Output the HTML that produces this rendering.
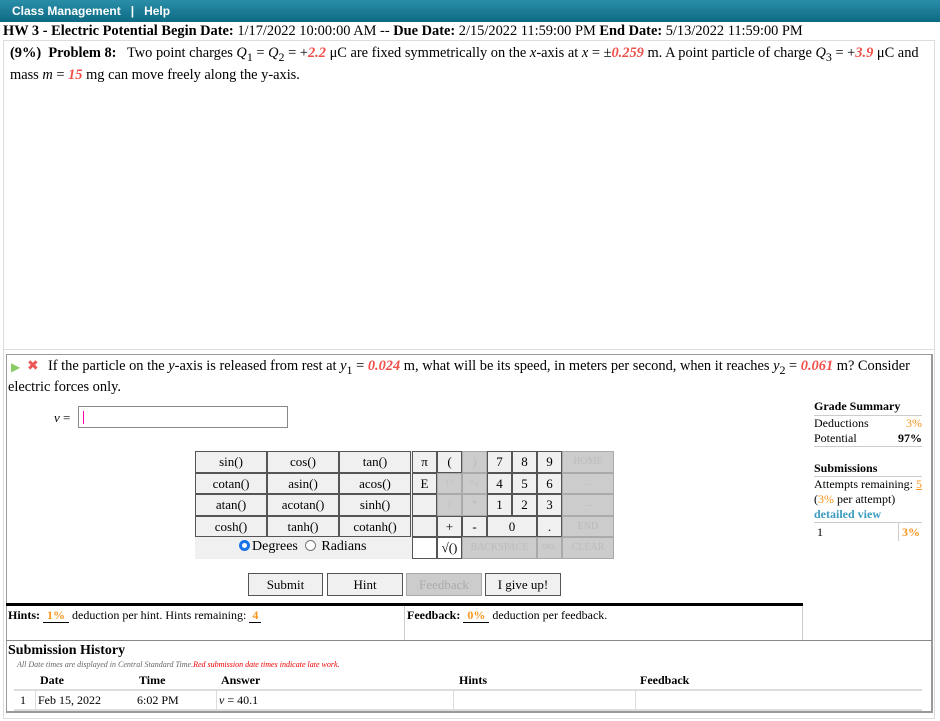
<!DOCTYPE html>
<html><head><meta charset="utf-8"><style>
*{margin:0;padding:0;box-sizing:border-box}
body{width:940px;height:721px;background:#fff;font-family:"Liberation Serif",serif;font-size:13px;color:#000;position:relative;overflow:hidden}
.a{position:absolute;white-space:nowrap}
.r{color:#f0504a;font-style:italic;font-weight:bold}
.o{color:#f7941d}
.bar{left:0;top:0;width:940px;height:22px;background:linear-gradient(#2a8ea8,#0e6a85);color:#fff;font-family:"Liberation Sans",sans-serif;font-weight:bold;font-size:12px;padding:4px 0 0 12px}
.c{position:absolute;border:1px solid #555;background:#f0f0f0;text-align:center;font-size:13px;line-height:19px}
.c.d{background:#ccc;color:#bbb;border-color:#aaa;font-size:10px}
.btn{position:absolute;top:573px;height:23px;border:1px solid #555;background:#f0f0f0;text-align:center;line-height:21px;font-size:13px}
.rad{display:inline-block;width:11px;height:11px;border-radius:50%;border:1px solid #777;vertical-align:-1px;margin-right:2px;background:#fff}
.rad.on{border:3px solid #1a73e8}
</style></head><body>
<div class="a bar">Class Management &nbsp;&nbsp;| &nbsp;&nbsp;Help</div>
<div class="a" style="left:3px;top:23px;font-size:14.4px"><b>HW 3 - Electric Potential Begin Date:</b> 1/17/2022 10:00:00 AM -- <b>Due Date:</b> 2/15/2022 11:59:00 PM <b>End Date:</b> 5/13/2022 11:59:00 PM</div>
<div class="a" style="left:3px;top:40px;width:932px;height:679px;border:1px solid #ddd"></div>
<div class="a" style="left:10px;top:45px;font-size:14.4px"><b>(9%)&nbsp; Problem 8:</b>&nbsp;&nbsp; Two point charges <i>Q</i><sub>1</sub> = <i>Q</i><sub>2</sub> = +<span class="r">2.2</span> μC are fixed symmetrically on the <i>x</i>-axis at <i>x</i> = ±<span class="r">0.259</span> m. A point particle of charge <i>Q</i><sub>3</sub> = +<span class="r">3.9</span> μC and</div>
<div class="a" style="left:10px;top:67px;font-size:14.4px">mass <i>m</i> = <span class="r">15</span> mg can move freely along the y-axis.</div>
<div class="a" style="left:3px;top:349px;width:932px;height:1px;background:#ddd"></div>
<div class="a" style="left:6px;top:354px;width:927px;height:359px;border:2px solid #999;border-width:1px 2px 2px 1px"></div>
<div class="a" style="left:11px;top:360px;font-size:12px;color:#8c6">&#9654;</div>
<div class="a" style="left:27px;top:358px;font-size:14px;color:#e55">&#10006;</div>
<div class="a" style="left:48px;top:358px;font-size:14.4px">If the particle on the <i>y</i>-axis is released from rest at <i>y</i><sub>1</sub> = <span class="r">0.024</span> m, what will be its speed, in meters per second, when it reaches <i>y</i><sub>2</sub> = <span class="r">0.061</span> m? Consider</div>
<div class="a" style="left:8px;top:379px;font-size:14.4px">electric forces only.</div>
<div class="a" style="left:54px;top:410px;font-size:13px"><i>v</i> =</div>
<div class="a" style="left:78px;top:406px;width:210px;height:22px;border:1px solid #888"><div style="position:absolute;left:4px;top:4px;width:1px;height:13px;background:#f0a"></div></div>
<div class="a" style="left:814px;top:399px;font-size:12px;width:108px"><b>Grade Summary</b><div style="border-top:1px solid #ccc;margin-top:1px;line-height:15px">Deductions<span class="o" style="float:right">3%</span><br>Potential<b style="float:right">97%</b></div><div style="border-top:1px solid #ccc"></div>
<div style="margin-top:14px"><b>Submissions</b></div><div style="border-top:1px solid #ccc;line-height:15px">Attempts remaining: <span class="o" style="text-decoration:underline;color:#f7941d">5</span><br>(<span class="o">3%</span> per attempt)<br><b style="color:#3a9ac0">detailed view</b></div>
<div style="border-top:1px solid #ccc;line-height:18px;position:relative">&nbsp;1<span class="o" style="position:absolute;left:84px;border-left:1px solid #ccc;padding-left:3px"><b>3%</b></span></div></div>
<div class="a" style="left:195px;top:451px;width:419px;height:108px;background:#f0f0f0"></div>
<div class="c" style="left:195px;top:451px;width:72px;height:22px">sin()</div>
<div class="c" style="left:267px;top:451px;width:72px;height:22px">cos()</div>
<div class="c" style="left:339px;top:451px;width:72px;height:22px">tan()</div>
<div class="c" style="left:195px;top:473px;width:72px;height:21px">cotan()</div>
<div class="c" style="left:267px;top:473px;width:72px;height:21px">asin()</div>
<div class="c" style="left:339px;top:473px;width:72px;height:21px">acos()</div>
<div class="c" style="left:195px;top:494px;width:72px;height:22px">atan()</div>
<div class="c" style="left:267px;top:494px;width:72px;height:22px">acotan()</div>
<div class="c" style="left:339px;top:494px;width:72px;height:22px">sinh()</div>
<div class="c" style="left:195px;top:516px;width:72px;height:21px">cosh()</div>
<div class="c" style="left:267px;top:516px;width:72px;height:21px">tanh()</div>
<div class="c" style="left:339px;top:516px;width:72px;height:21px">cotanh()</div>
<div class="a" style="left:239px;top:539px;font-size:14px"><span class="rad on"></span>Degrees &nbsp;<span class="rad"></span> Radians</div>
<div class="c" style="left:412px;top:451px;width:25px;height:22px">π</div>
<div class="c" style="left:437px;top:451px;width:25px;height:22px">(</div>
<div class="c d" style="left:462px;top:451px;width:25px;height:22px;font-size:13px">)</div>
<div class="c" style="left:487px;top:451px;width:25px;height:22px">7</div>
<div class="c" style="left:512px;top:451px;width:25px;height:22px">8</div>
<div class="c" style="left:537px;top:451px;width:25px;height:22px">9</div>
<div class="c d" style="left:562px;top:451px;width:52px;height:22px">HOME</div>
<div class="c" style="left:412px;top:473px;width:25px;height:21px">E</div>
<div class="c d" style="left:437px;top:473px;width:25px;height:21px">↑^</div>
<div class="c d" style="left:462px;top:473px;width:25px;height:21px">^↓</div>
<div class="c" style="left:487px;top:473px;width:25px;height:21px">4</div>
<div class="c" style="left:512px;top:473px;width:25px;height:21px">5</div>
<div class="c" style="left:537px;top:473px;width:25px;height:21px">6</div>
<div class="c d" style="left:562px;top:473px;width:52px;height:21px">←</div>
<div class="c" style="left:412px;top:494px;width:25px;height:22px"></div>
<div class="c d" style="left:437px;top:494px;width:25px;height:22px">/</div>
<div class="c d" style="left:462px;top:494px;width:25px;height:22px">*</div>
<div class="c" style="left:487px;top:494px;width:25px;height:22px">1</div>
<div class="c" style="left:512px;top:494px;width:25px;height:22px">2</div>
<div class="c" style="left:537px;top:494px;width:25px;height:22px">3</div>
<div class="c d" style="left:562px;top:494px;width:52px;height:22px">→</div>
<div class="c" style="left:412px;top:516px;width:25px;height:21px"></div>
<div class="c" style="left:437px;top:516px;width:25px;height:21px">+</div>
<div class="c" style="left:462px;top:516px;width:25px;height:21px">-</div>
<div class="c" style="left:487px;top:516px;width:50px;height:21px">0</div>
<div class="c" style="left:537px;top:516px;width:25px;height:21px">.</div>
<div class="c d" style="left:562px;top:516px;width:52px;height:21px">END</div>
<div class="c" style="left:412px;top:537px;width:25px;height:22px;background:#fff"></div>
<div class="c" style="left:437px;top:537px;width:25px;height:22px;background:#fff">√()</div>
<div class="c d" style="left:462px;top:537px;width:75px;height:22px">BACKSPACE</div>
<div class="c d" style="left:537px;top:537px;width:25px;height:22px;font-size:7px">DEL</div>
<div class="c d" style="left:562px;top:537px;width:52px;height:22px">CLEAR</div>
<div class="btn" style="left:248px;width:75px">Submit</div>
<div class="btn" style="left:327px;width:76px">Hint</div>
<div class="btn" style="left:406px;width:76px;background:#ccc;color:#aaa;border-color:#aaa">Feedback</div>
<div class="btn" style="left:485px;width:76px">I give up!</div>
<div class="a" style="left:6px;top:603px;width:797px;height:3px;background:#000"></div>
<div class="a" style="left:404px;top:606px;width:1px;height:35px;background:#ccc"></div>
<div class="a" style="left:802px;top:606px;width:1px;height:35px;background:#ccc"></div>
<div class="a" style="left:8px;top:608px;font-size:12px"><b>Hints:</b> <span class="o" style="border-bottom:1px solid #000;padding:0 4px"><b>1%</b></span> deduction per hint. Hints remaining: <span class="o" style="border-bottom:1px solid #000;padding:0 3px"><b>4</b></span></div>
<div class="a" style="left:407px;top:608px;font-size:12px"><b>Feedback:</b> <span class="o" style="border-bottom:1px solid #000;padding:0 4px"><b>0%</b></span> deduction per feedback.</div>
<div class="a" style="left:6px;top:640px;width:926px;height:1px;background:#888"></div>
<div class="a" style="left:8px;top:643px;font-size:14px"><b>Submission History</b></div>
<div class="a" style="left:17px;top:660px;font-size:8px;font-style:italic;color:#666">All Date times are displayed in Central Standard Time.<span style="color:#e00">Red submission date times indicate late work.</span></div>
<div class="a" style="left:40px;top:673px;font-size:12px"><b>Date</b></div>
<div class="a" style="left:139px;top:673px;font-size:12px"><b>Time</b></div>
<div class="a" style="left:221px;top:673px;font-size:12px"><b>Answer</b></div>
<div class="a" style="left:459px;top:673px;font-size:12px"><b>Hints</b></div>
<div class="a" style="left:640px;top:673px;font-size:12px"><b>Feedback</b></div>
<div class="a" style="left:14px;top:689px;width:908px;height:2px;background:#ddd"></div>
<div class="a" style="left:14px;top:709px;width:908px;height:2px;background:#ddd"></div>
<div class="a" style="left:35px;top:691px;width:1px;height:18px;background:#ddd"></div>
<div class="a" style="left:216px;top:691px;width:1px;height:18px;background:#ddd"></div>
<div class="a" style="left:453px;top:691px;width:1px;height:18px;background:#ddd"></div>
<div class="a" style="left:635px;top:691px;width:1px;height:18px;background:#ddd"></div>
<div class="a" style="left:20px;top:693px;font-size:12px">1</div>
<div class="a" style="left:38px;top:693px;font-size:12px">Feb 15, 2022</div>
<div class="a" style="left:137px;top:693px;font-size:12px">6:02 PM</div>
<div class="a" style="left:219px;top:693px;font-size:12px"><i>v</i> = 40.1</div>
</body></html>
